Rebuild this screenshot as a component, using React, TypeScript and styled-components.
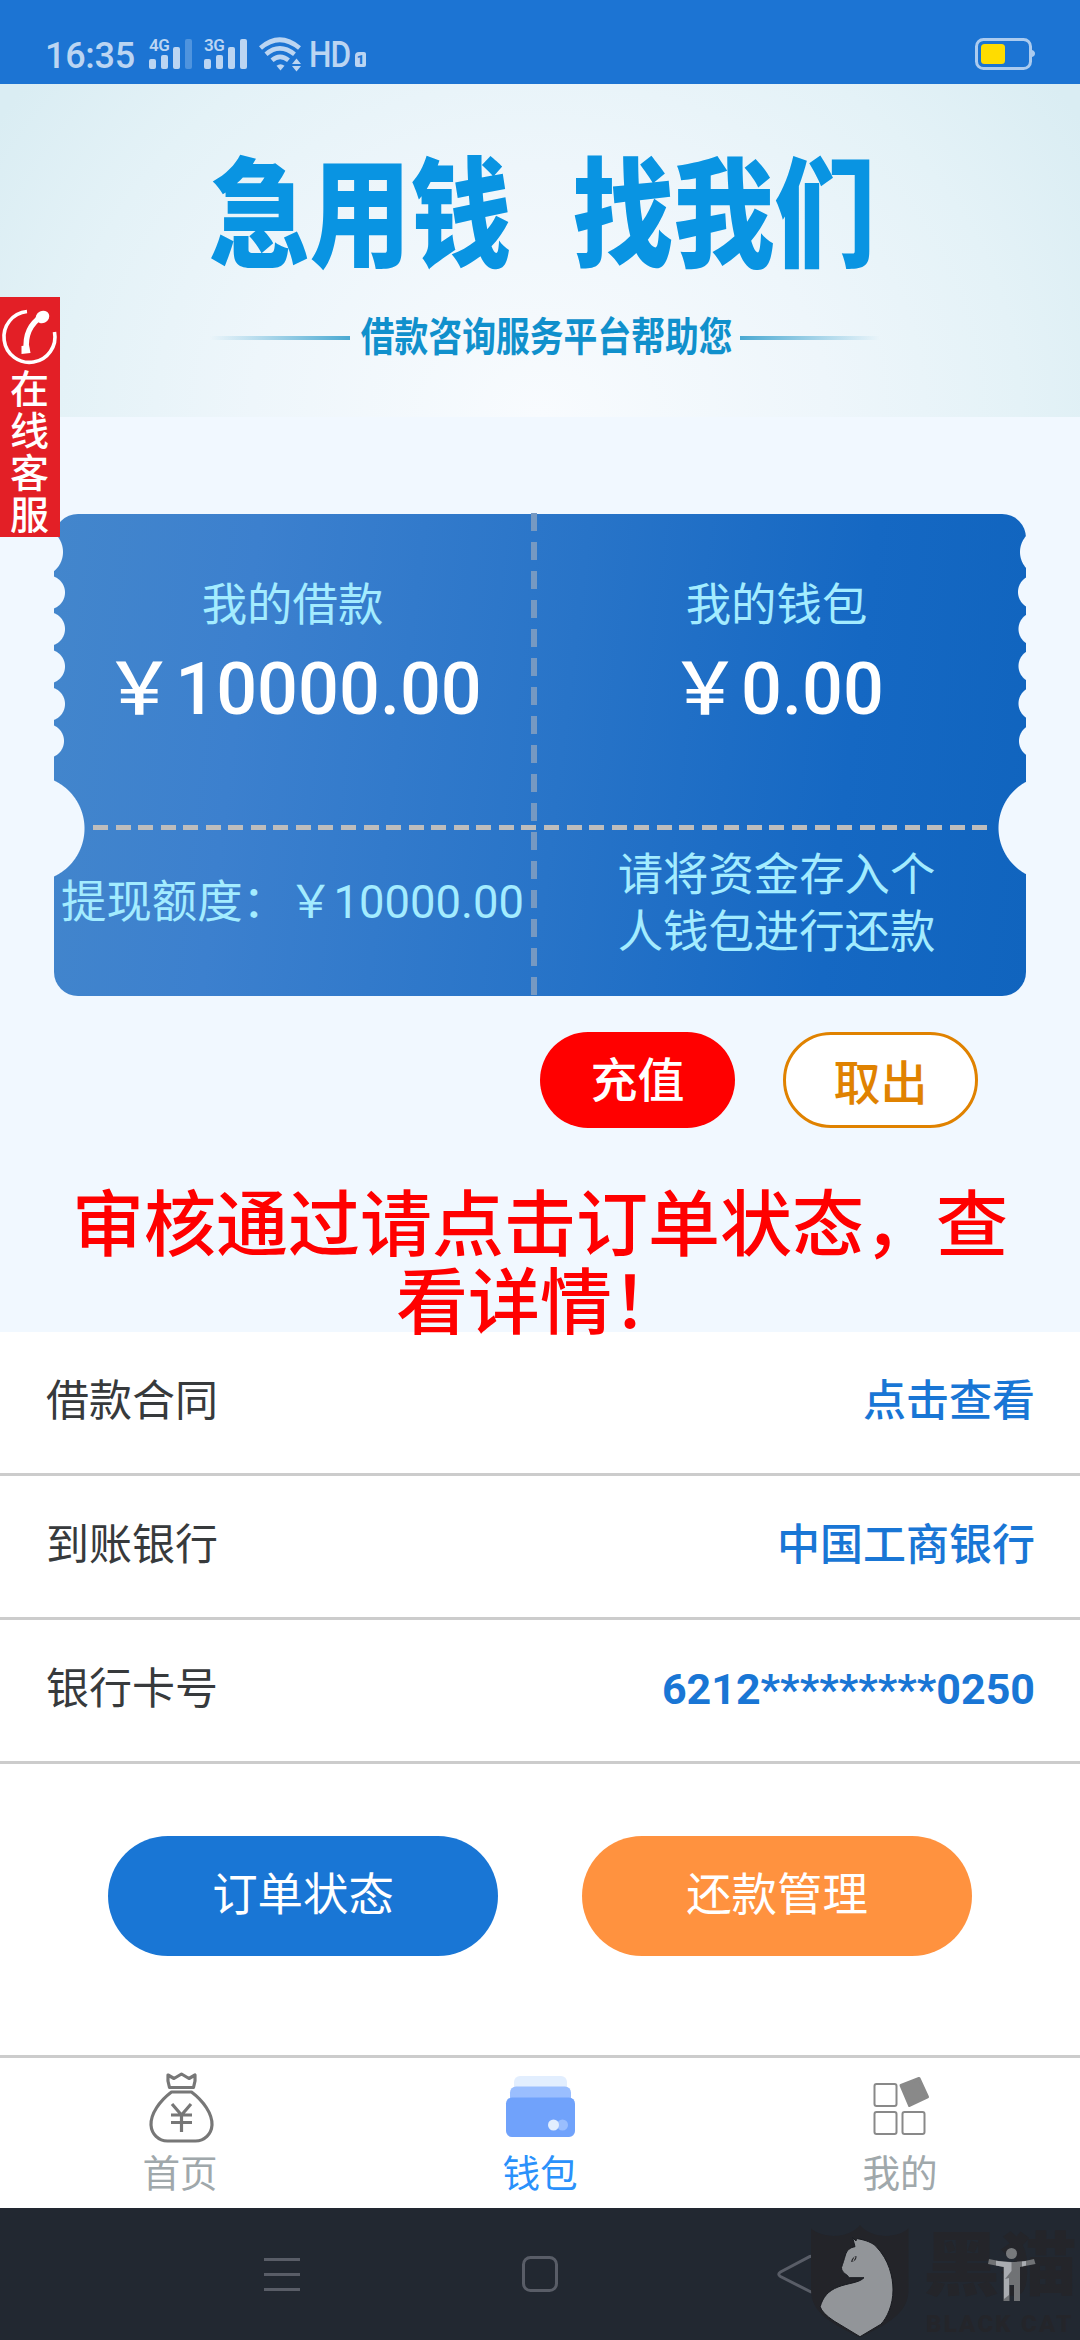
import React from "react";
import styled, { createGlobalStyle, css } from "styled-components";

const GlobalStyle = createGlobalStyle`
  *, *::before, *::after { box-sizing: border-box; }
  html, body { margin: 0; padding: 0; background: #fff; }
  body { font-family: Roboto, "Noto Sans CJK SC", sans-serif; }
`;

const PAGE_BG = "#f1f8ff";
const BLUE = "#1976d5";

const Screen = styled.main`
  position: relative;
  display: flex;
  flex-direction: column;
  width: 1080px;
  height: 2340px;
  overflow: hidden;
  background: #fff;
`;

/* ---------- status bar ---------- */

const StatusBar = styled.header`
  display: flex;
  justify-content: space-between;
  height: 84px;
  padding: 36px 44px 0 45px;
  background: #1c74d3;
  color: #bbd5f2;
`;

const StatusGroup = styled.div`
  display: flex;
  align-items: flex-start;
`;

const Clock = styled.span`
  width: 104px;
  font-size: 36px;
  font-weight: 500;
  line-height: 40px;
  letter-spacing: -0.3px;
`;

const Signal = styled.div`
  position: relative;
  display: flex;
  align-items: flex-end;
  gap: 5px;
  width: 43px;
  height: 33px;
  margin-right: 12px;
`;

const Bar = styled.i<{ $h: number; $dim?: boolean }>`
  width: 7px;
  height: ${(p) => p.$h}px;
  border-radius: 2px;
  background: ${(p) => (p.$dim ? "#4f94de" : "#bbd5f2")};
`;

const NetLabel = styled.span`
  position: absolute;
  left: 0;
  top: 1px;
  font-size: 17px;
  font-weight: 600;
  line-height: 16px;
  letter-spacing: -0.5px;
`;

const HdLabel = styled.span`
  margin-left: 8px;
  font-size: 36px;
  font-weight: 500;
  line-height: 38px;
  letter-spacing: -1px;
  transform: scaleX(0.88);
  transform-origin: left;
  width: 46px;
`;

const SimTag = styled.span`
  width: 11px;
  height: 15px;
  margin-top: 16px;
  border-radius: 4px 2px 2px 2px;
  background: #bbd5f2;
  color: #1c74d3;
  font-size: 13px;
  font-weight: 900;
  line-height: 16px;
  text-align: center;
`;

/* ---------- banner ---------- */

const Banner = styled.section`
  display: flex;
  flex-direction: column;
  align-items: center;
  height: 333px;
  padding-top: 59px;
  background: radial-gradient(ellipse 640px 560px at 50% 100%, #f8fbfe 0%, #eef6fb 45%, #e4f2f7 75%, #daedf3 100%);
`;

const Headline = styled.h1`
  display: flex;
  gap: 72px;
  margin: 0 0 0 3px;
  color: #0994e2;
  font-size: 119px;
  font-weight: 900;
  line-height: 150px;
  white-space: nowrap;
  transform: scaleX(0.848);
`;

const Tagline = styled.div`
  display: flex;
  align-items: center;
  height: 50px;
  margin-top: 20px;
  margin-left: 9px;
`;

const TaglineText = styled.p`
  width: 440px;
  margin: 0 -25px;
  padding-left: 2px;
  color: #1090cc;
  font-size: 40px;
  font-weight: 700;
  line-height: 50px;
  white-space: nowrap;
  text-align: center;
  transform: scaleX(0.845);
`;

const Rule = styled.i<{ $flip?: boolean }>`
  width: 140px;
  height: 4px;
  background: linear-gradient(${(p) => (p.$flip ? "270deg" : "90deg")}, rgba(60, 160, 205, 0), #4aa9d2);
`;

/* ---------- floating customer service tag ---------- */

const ServiceTag = styled.aside`
  position: absolute;
  left: 0;
  top: 297px;
  z-index: 2;
  display: flex;
  flex-direction: column;
  align-items: center;
  width: 60px;
  height: 240px;
  padding-top: 9px;
  background: #e31f26;
  color: #fff;
`;

const ServiceText = styled.span`
  width: 40px;
  margin-top: 3px;
  font-size: 39px;
  font-weight: 500;
  line-height: 42px;
  word-break: break-all;
`;

/* ---------- wallet ticket ---------- */

const WalletSection = styled.section`
  display: flex;
  flex-direction: column;
  height: 915px;
  padding-top: 97px;
  background: ${PAGE_BG};
`;

type Bite = [x: number, y: number, r: number];

const bites: Bite[] = [
  [-16, 38, 25],
  [-6, 78.5, 17],
  [-6, 115, 17],
  [-6, 152.5, 17],
  [-6, 190, 17],
  [-7, 227, 17],
  [-22.5, 314.5, 53],
  [990, 38, 24],
  [981, 78, 17],
  [981.5, 115, 17],
  [981.5, 152, 17],
  [981.5, 189.5, 17],
  [982, 227, 17],
  [997, 314, 52.5],
];

const biteLayers = bites
  .map(([x, y, r]) => `radial-gradient(circle at ${x}px ${y}px, ${PAGE_BG} ${r - 0.5}px, transparent ${r + 0.5}px)`)
  .join(", ");

const Ticket = styled.div`
  position: relative;
  display: grid;
  grid-template-columns: 477px 6px 479px;
  grid-template-rows: 310px 172px;
  width: 972px;
  height: 482px;
  margin-left: 54px;
  border-radius: 24px;
  background: ${biteLayers}, linear-gradient(97deg, #4386cc 0%, #3c80ce 20%, #2874c8 52%, #1568c3 80%, #1064be 100%);

  &::before {
    content: "";
    position: absolute;
    left: 477px;
    top: -1px;
    width: 6px;
    height: 483px;
    background: repeating-linear-gradient(180deg, #7699c2 0 18px, transparent 18px 29px);
  }

  &::after {
    content: "";
    position: absolute;
    left: 38.5px;
    top: 310.5px;
    width: 895px;
    height: 5px;
    background: repeating-linear-gradient(90deg, #bdbdbd 0 15px, transparent 15px 22.55px);
  }
`;

const Balance = styled.div<{ $right?: boolean }>`
  grid-column: ${(p) => (p.$right ? 3 : 1)};
  display: flex;
  flex-direction: column;
  align-items: center;
  padding-top: 64px;
`;

const ticketText = css`
  color: #a3ecff;
  font-size: 45.4px;
  white-space: nowrap;
`;

const BalanceTitle = styled.span`
  ${ticketText}
  line-height: 56px;
`;

const Amount = styled.strong`
  color: #fff;
  font-size: 72px;
  font-weight: 500;
  line-height: 84px;
  margin-top: 14px;
  white-space: nowrap;
`;

const TicketNote = styled.p<{ $right?: boolean }>`
  ${ticketText}
  grid-column: ${(p) => (p.$right ? 3 : 1)};
  align-self: start;
  margin: 0;
  padding-top: ${(p) => (p.$right ? 23 : 50)}px;
  line-height: 57px;
  text-align: center;
`;

const Actions = styled.div`
  display: flex;
  justify-content: flex-end;
  gap: 48px;
  margin-top: 36px;
  padding-right: 102px;
`;

const SmallButton = styled.button<{ $outline?: boolean }>`
  width: 195px;
  height: 96px;
  padding: ${(p) => (p.$outline ? "9px" : "2px")} 0 0;
  border: ${(p) => (p.$outline ? "3px solid #e08200" : "0")};
  border-radius: 48px;
  background: ${(p) => (p.$outline ? "#fff" : "#f00")};
  color: ${(p) => (p.$outline ? "#e08200" : "#fff")};
  font: 500 47px/1.2 Roboto, "Noto Sans CJK SC", sans-serif;
`;

const Notice = styled.p`
  position: relative;
  width: 942px;
  margin: 59px 0 0 72px;
  padding-right: 6px;
  color: #f00;
  font-size: 72px;
  font-weight: 500;
  line-height: 78px;
  text-align: center;
`;

/* ---------- details ---------- */

const Row = styled.div`
  display: flex;
  flex: none;
  align-items: center;
  justify-content: space-between;
  height: 144px;
  padding: 0 45px 4px 46px;
  border-bottom: 3px solid #ccc;
  font-size: 43px;
  line-height: 60px;
`;

const RowLabel = styled.span`
  color: #373a3c;
`;

const RowValue = styled.span<{ $bold?: boolean }>`
  color: ${BLUE};
  font-weight: ${(p) => (p.$bold ? 700 : 500)};
`;

const MainActions = styled.div`
  display: flex;
  flex: none;
  justify-content: space-between;
  height: 291px;
  padding: 72px 108px 0;
`;

const PillButton = styled.button<{ $color: string }>`
  width: 390px;
  height: 120px;
  padding: 1px 0 0;
  border: 0;
  border-radius: 60px;
  background: ${(p) => p.$color};
  color: #fff;
  font: 400 45.4px/1.2 Roboto, "Noto Sans CJK SC", sans-serif;
`;

/* ---------- tab bar ---------- */

const TabBar = styled.nav`
  display: grid;
  flex: none;
  grid-template-columns: repeat(3, 1fr);
  height: 153px;
  border-top: 3px solid #ccc;
`;

const Tab = styled.a<{ $active?: boolean }>`
  display: flex;
  flex-direction: column;
  align-items: center;
  padding-top: 13px;
  color: ${(p) => (p.$active ? "#2a91fb" : "#a0a8ab")};
  font-size: 37.6px;
  line-height: 48px;

  svg { display: block; margin-bottom: 7px; }
`;

/* ---------- system navigation ---------- */

const SystemNav = styled.footer`
  position: relative;
  display: flex;
  flex: none;
  gap: 222px;
  height: 132px;
  padding: 46px 0 0 264px;
  background: #222831;

  svg { display: block; flex: none; }
`;

const Watermark = styled.div`
  position: absolute;
  left: 811px;
  top: 12px;
  display: flex;
  gap: 14px;
`;

const Brand = styled.div`
  display: flex;
  flex-direction: column;
  padding-top: 5px;
  color: #24252a;
  white-space: nowrap;
`;

const BrandName = styled.span`
  font-size: 77px;
  font-weight: 900;
  line-height: 84px;
  transform: scaleY(0.9);
`;

const BrandLatin = styled.span`
  margin-top: 3px;
  padding-left: 3px;
  font-size: 24px;
  font-weight: 900;
  line-height: 24px;
  letter-spacing: 2.2px;
`;

const Accessibility = styled.div`
  position: absolute;
  left: 987px;
  top: 39px;
`;

const WifiIcon = () => (
  <svg width="42" height="36" viewBox="0 0 42 36" fill="none" stroke="#bbd5f2" strokeWidth="4.6">
    <path d="M1.5 12 Q20.5 -4.5 40.5 12" />
    <path d="M7 18.2 Q20.5 6.5 35.5 18.2" />
    <path d="M13 24.3 Q21 17.5 29.5 24.3" />
    <path d="M17.5 29.8 Q21.5 26.5 25.5 29.8 L21.5 34.5 Z" fill="#bbd5f2" stroke="none" />
    <path d="M33 28 L37.5 22.5 L42 28 Z M33 30 L37.5 35.5 L42 30 Z" fill="#bbd5f2" stroke="none" />
  </svg>
);

const BatteryIcon = () => (
  <svg width="61" height="36" viewBox="0 0 61 36">
    <rect x="1.5" y="3.5" width="54" height="29" rx="7" fill="none" stroke="#abcbef" strokeWidth="3" />
    <rect x="6" y="8" width="24" height="20" rx="3.5" fill="#ffdc00" />
    <path d="M57 14 Q60 15 60 17.5 Q60 20 57 21 Z" fill="#abcbef" />
  </svg>
);

const PhoneIcon = () => (
  <svg width="60" height="60" viewBox="0 0 60 60" fill="none">
    <path d="M27 5.5 A25.5 25.5 0 1 0 54.5 26" stroke="#fff" strokeWidth="3.6" />
    <path d="M42 10 Q24 22 26.5 44" stroke="#fff" strokeWidth="5.5" />
    <ellipse cx="42.5" cy="11" rx="7" ry="6" transform="rotate(-25 42.5 11)" fill="#fff" />
    <path d="M21.5 40 L29 39 L30.5 47 L21.5 48 Z" fill="#fff" />
  </svg>
);

const BagIcon = () => (
  <svg width="70" height="72" viewBox="0 0 70 72" fill="none" stroke="#777" strokeWidth="3.2" strokeLinejoin="round">
    <g transform="translate(1.5 1)">
      <path d="M23 15.5 C21 10 21 7 21.5 3 L27.5 6.5 L35 2 L42.5 6.5 L48.5 3 C49 7 49 10 47 15.5 Z" />
      <path d="M25 20 H45 C57 29 66 42 65.5 53 C65 62 58 69 49 69 H21 C12 69 5 62 4.5 53 C4 42 13 29 25 20 Z" />
      <path d="M25.5 32 L35 43 L44.5 32 M24.5 43 H45.5 M24.5 50.5 H45.5 M35 43 V60" />
    </g>
  </svg>
);

const WalletIcon = () => (
  <svg width="70" height="72" viewBox="0 0 70 72">
    <rect x="9" y="5" width="53" height="30" rx="6" fill="#e2eefe" />
    <rect x="5" y="15.5" width="61" height="30" rx="6" fill="#9abefe" />
    <rect x="1" y="26.5" width="69" height="39.5" rx="6" fill="#70a2fb" />
    <circle cx="57.5" cy="54" r="5.5" fill="#9abefe" />
    <circle cx="48.5" cy="54" r="5.5" fill="#e2eefe" />
  </svg>
);

const GridIcon = () => (
  <svg width="70" height="72" viewBox="0 0 70 72" fill="none" stroke="#898989" strokeWidth="2">
    <rect x="9.5" y="13" width="22" height="22" rx="2" />
    <rect x="9.5" y="41" width="22" height="22" rx="2" />
    <rect x="37.5" y="41" width="22" height="22" rx="2" />
    <path d="M36 14.5 L54 7.5 L62.5 26 L44.5 34.5 Z" fill="#898989" strokeWidth="3" strokeLinejoin="round" />
  </svg>
);

const NavIcon = styled.svg.attrs({ width: 36, height: 42, viewBox: "0 0 36 42", fill: "none" })`
  stroke: #595d67;
  stroke-width: 3;
  overflow: visible;
`;

const CatBadge = () => (
  <svg width="98" height="120" viewBox="0 0 98 120">
    <path
      d="M0 8.3 C10 18 37 20 49 5 C61 20 88 18 97.5 8.3 V70 C97.5 93 77 104 49 117.5 C21 104 0 93 0 70 Z"
      fill="#232429"
    />
    <path
      d="M41.7 17.7 L45 21 L45.5 18.5 C55 20 62 23 65.3 26.7 C78 40 82 57 82 70 C82 85 76 98 69.8 104.3 L49 116.7 L23 101 Q11 93 9.2 86.7 C12 77 17 71 27 67 C37 63 48 63 53 57.7 H38.3 C36 54 30.5 53 30.5 47.5 C32 43 33 40 34.4 35 C36 30 39 27.5 44 26.7 Z"
      fill="#929599"
      stroke="#191b20"
      strokeWidth="1"
    />
    <path d="M40 42 Q41 37 45.5 36 Q46 41 40 42 Z" fill="#232429" />
    <path d="M42 41 L44 37" stroke="#aaa" strokeWidth="1" />
  </svg>
);

const PersonIcon = () => (
  <svg width="50" height="56" viewBox="0 0 50 56">
    <circle cx="24.5" cy="6.5" r="5.5" fill="#77797c" />
    <path d="M2 12 Q24 18 47 12 L48.5 17 L33 20 V54 H27 V38 H22.5 V54 H16.5 V20 L1 17 Z" fill="#707275" />
    <path d="M9 13.8 Q17 15.2 24.5 15.2 V24 L18 32 L22 31 V38 V48 L17 52 V20 L9 18.5 Z" fill="#a9acb1" />
    <path d="M35 14.5 L39 14 V18.5 L35 19.5 Z" fill="#a9acb1" />
  </svg>
);

const rows = [
  { label: "借款合同", value: "点击查看" },
  { label: "到账银行", value: "中国工商银行" },
  { label: "银行卡号", value: "6212*********0250", bold: true },
];

const signals = [
  { net: "4G", dimLast: true },
  { net: "3G", dimLast: false },
];

export default function App() {
  return (
    <Screen>
      <GlobalStyle />
      <StatusBar>
        <StatusGroup>
          <Clock>16:35</Clock>
          {signals.map((s) => (
            <Signal key={s.net}>
              <NetLabel>{s.net}</NetLabel>
              {[10, 14, 22, 30].map((h) => (
                <Bar key={h} $h={h} $dim={s.dimLast && h === 30} />
              ))}
            </Signal>
          ))}
          <WifiIcon />
          <HdLabel>HD</HdLabel>
          <SimTag>1</SimTag>
        </StatusGroup>
        <BatteryIcon />
      </StatusBar>

      <Banner>
        <Headline>
          <span>急用钱</span>
          <span>找我们</span>
        </Headline>
        <Tagline>
          <Rule />
          <TaglineText>借款咨询服务平台帮助您</TaglineText>
          <Rule $flip />
        </Tagline>
      </Banner>

      <ServiceTag>
        <PhoneIcon />
        <ServiceText>在线客服</ServiceText>
      </ServiceTag>

      <WalletSection>
        <Ticket>
          <Balance>
            <BalanceTitle>我的借款</BalanceTitle>
            <Amount>￥10000.00</Amount>
          </Balance>
          <Balance $right>
            <BalanceTitle>我的钱包</BalanceTitle>
            <Amount>￥0.00</Amount>
          </Balance>
          <TicketNote>提现额度：￥10000.00</TicketNote>
          <TicketNote $right>
            请将资金存入个
            <br />
            人钱包进行还款
          </TicketNote>
        </Ticket>
        <Actions>
          <SmallButton>充值</SmallButton>
          <SmallButton $outline>取出</SmallButton>
        </Actions>
        <Notice>审核通过请点击订单状态，查看详情！</Notice>
      </WalletSection>

      {rows.map((r) => (
        <Row key={r.label}>
          <RowLabel>{r.label}</RowLabel>
          <RowValue $bold={r.bold}>{r.value}</RowValue>
        </Row>
      ))}

      <MainActions>
        <PillButton $color={BLUE}>订单状态</PillButton>
        <PillButton $color="#ff923f">还款管理</PillButton>
      </MainActions>

      <TabBar>
        <Tab>
          <BagIcon />
          首页
        </Tab>
        <Tab $active>
          <WalletIcon />
          钱包
        </Tab>
        <Tab>
          <GridIcon />
          我的
        </Tab>
      </TabBar>

      <SystemNav>
        <NavIcon>
          <path d="M0 5.5 H36 M0 20.5 H36 M0 35.5 H36" />
        </NavIcon>
        <NavIcon>
          <rect x="1.5" y="3.5" width="33" height="33" rx="7" />
        </NavIcon>
        <NavIcon>
          <path d="M0.5 18 L30 2.5 Q33 1.5 33 5 V35 Q33 39 30 37.5 L0.5 22.5 Q-3 20.3 0.5 18 Z" />
        </NavIcon>
        <Watermark>
          <CatBadge />
          <Brand>
            <BrandName>黑猫</BrandName>
            <BrandLatin>BLACK CAT</BrandLatin>
          </Brand>
        </Watermark>
        <Accessibility>
          <PersonIcon />
        </Accessibility>
      </SystemNav>
    </Screen>
  );
}
